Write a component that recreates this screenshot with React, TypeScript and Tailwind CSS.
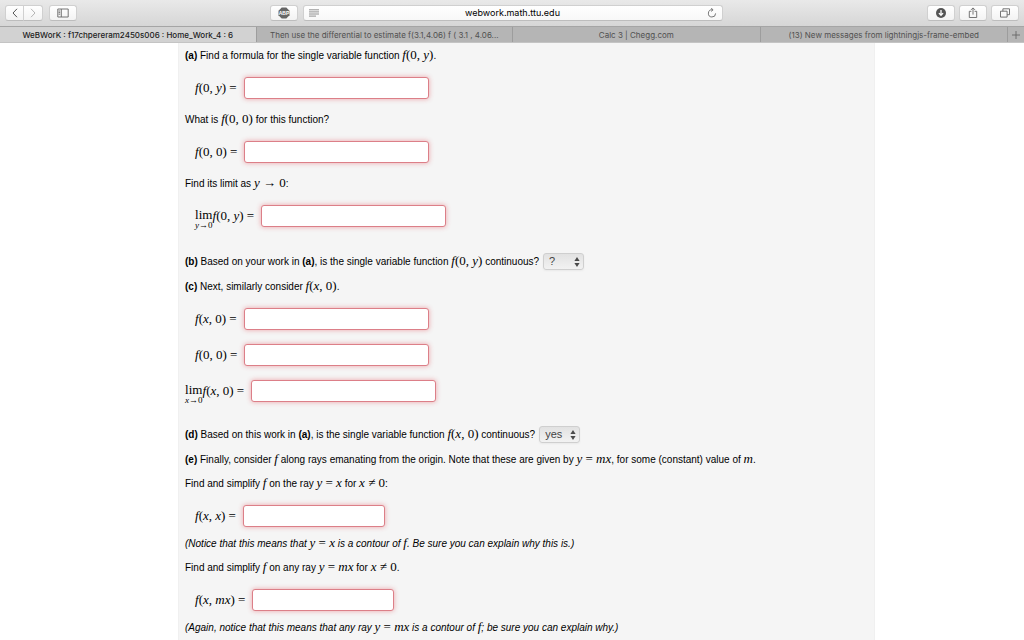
import React from 'react';

const TABS = [
  { title: 'WeBWorK : f17chpereram2450s006 : Home_Work_4 : 6', width: 'w-[25.45%]' },
  { title: 'Then use the differential to estimate f(3.1,4.06) f ( 3.1 , 4.06...', width: 'w-[25.45%]' },
  { title: 'Calc 3 | Chegg.com', width: 'flex-1' },
  { title: '(13) New messages from lightningjs-frame-embed', width: 'flex-1' },
];

// Letters are variables and go italic, everything else stays upright
function Tex({ children }: { children: string }) {
  return (
    <span className="font-['Liberation_Serif',serif] text-[13px] leading-none not-italic">
      {children.split(/([a-z]+)/).map((part, i) => (i % 2 ? <i key={i}>{part}</i> : part))}
    </span>
  );
}

function Line({ className = '', children }: { className?: string; children: React.ReactNode }) {
  return <p className={`h-6 leading-[26px] ${className}`}>{children}</p>;
}

interface AnswerProps {
  id: string;
  tex: string;
  limit?: string;
  row?: string;
  indent?: string;
  size?: string;
}

function Answer({ id, tex, limit, row = 'h-10 pt-2.5', indent = 'pl-2.5', size = 'w-[185px]' }: AnswerProps) {
  return (
    <div className={`flex items-start ${row} ${indent}`}>
      <label htmlFor={id} className="flex h-5 items-center pr-[7px]">
        {limit && (
          <span className="-mb-2 flex flex-col items-center font-['Liberation_Serif',serif]">
            <span className="text-[13px] leading-3">lim</span>
            <span className="text-[9px] leading-2"><i>{limit}</i>→0</span>
          </span>
        )}
        <Tex>{tex}</Tex>
      </label>
      <input
        id={id}
        type="text"
        className={`h-[22px] rounded-[3px] border border-[#dc7f88] bg-white px-1 text-[11px] shadow-[0_0_5px_rgba(225,60,70,0.45)] outline-none ${size}`}
      />
    </div>
  );
}

function Picker({ id, value, options }: { id: string; value: string; options: string[] }) {
  return (
    <span className="relative ml-1 inline-flex">
      <select
        id={id}
        defaultValue={value}
        className="h-[17px] w-[41px] appearance-none rounded-[3px] border border-[#cfcfcf] bg-linear-to-b from-[#e2e2e2] to-[#f2f2f2] pl-[5px] text-[11px] leading-none text-[#444] shadow-xs outline-none"
      >
        {options.map((o) => <option key={o}>{o}</option>)}
      </select>
      <svg viewBox="0 0 6 10" className="pointer-events-none absolute top-1 right-1 h-2.5 w-1.5 fill-[#4a4a4a]">
        <path d="M3 0 5.6 4H.4zM3 10 .4 6h5.2z" />
      </svg>
    </span>
  );
}

function ToolButton({ label, className, children }: { label: string; className: string; children: React.ReactNode }) {
  return (
    <button
      aria-label={label}
      className={`flex h-4 shrink-0 items-center justify-center border border-[#d0d0d0] border-b-[#bdbdbd] bg-linear-to-b from-white to-[#f3f3f3] ${className}`}
    >
      {children}
    </button>
  );
}

function Toolbar() {
  return (
    <div className="flex h-[26px] items-center bg-linear-to-b from-[#e9e9e9] to-[#d6d6d6] px-[5px]">
      <ToolButton label="Back" className="w-[19px] rounded-l-[3px]">
        <svg viewBox="0 0 6 10" className="h-2.5 w-1.5 fill-none stroke-[#555]"><path d="M5 .8 1 5l4 4.2" /></svg>
      </ToolButton>
      <ToolButton label="Forward" className="-ml-px w-5 rounded-r-[3px]">
        <svg viewBox="0 0 6 10" className="h-2.5 w-1.5 fill-none stroke-[#b5b5b5]"><path d="m1 .8 4 4.2-4 4.2" /></svg>
      </ToolButton>
      <ToolButton label="Sidebar" className="ml-1.5 w-7 rounded-[3px]">
        <svg viewBox="0 0 12 10" className="h-2.5 w-3 fill-none stroke-[#666]">
          <path d="M.8 1h10.4v8H.8zM4.3 1v8M1.6 3h1.6M1.6 4.6h1.6M1.6 6.2h1.6" strokeWidth=".9" />
        </svg>
      </ToolButton>

      <div className="flex min-w-0 flex-1 justify-center gap-[5px] pr-15 pl-12">
        <ToolButton label="Adblock" className="w-7 rounded-[3px]">
          <svg viewBox="0 0 12 12" className="h-3 w-3">
            <path d="M3.7.5h4.6l3.2 3.2v4.6l-3.2 3.2H3.7L.5 8.3V3.7z" fill="#666" />
            <text x="6" y="7.8" textAnchor="middle" className="fill-white font-['Liberation_Sans',sans-serif] text-[5px] font-bold">ABP</text>
          </svg>
        </ToolButton>
        <div className="flex h-4 w-[420px] items-center rounded-[3px] border border-[#d0d0d0] border-b-[#bdbdbd] bg-linear-to-b from-white to-[#f8f8f8] px-[5px]">
          <svg viewBox="0 0 10 8" className="h-2 w-2.5 stroke-[#777]"><path d="M0 .8h10M0 2.9h10M0 5h10M0 7.1h7" strokeWidth=".8" /></svg>
          <input
            aria-label="Address"
            defaultValue="webwork.math.ttu.edu"
            className="min-w-0 flex-1 bg-transparent text-center text-[9px] text-black outline-none"
          />
          <button aria-label="Reload">
            <svg viewBox="0 0 10 10" className="size-2.5 fill-none stroke-[#666]">
              <path d="M5.4 1.8A3.6 3.6 0 1 0 8.6 5.4M4.2.2l1.9 1.6-1.9 1.6" strokeWidth=".9" />
            </svg>
          </button>
        </div>
      </div>

      <div className="flex gap-1">
        <ToolButton label="Downloads" className="w-7 rounded-[3px]">
          <svg viewBox="0 0 12 12" className="size-3">
            <circle cx="6" cy="6" r="5" fill="#555" />
            <path d="M6 3v5M3.9 6.1 6 8.3l2.1-2.2" fill="none" stroke="#fff" strokeWidth="1.3" />
          </svg>
        </ToolButton>
        <ToolButton label="Share" className="w-7 rounded-[3px]">
          <svg viewBox="0 0 10 12" className="h-3 w-2.5 fill-none stroke-[#666]">
            <path d="M3.4 4.3H1.3v6.2h7.4V4.3H6.6M5 7.6V1M3 2.9l2-2 2 2" strokeWidth=".9" />
          </svg>
        </ToolButton>
        <ToolButton label="Show all tabs" className="w-7 rounded-[3px]">
          <svg viewBox="0 0 12 12" className="size-3 fill-none stroke-[#666]">
            <path d="M1.5 4.2h6.6v5.9H1.5zM3.9 4.2V1.8h6.6v5.9H8.1" strokeWidth=".9" />
          </svg>
        </ToolButton>
      </div>
    </div>
  );
}

function TabBar() {
  return (
    <div role="tablist" className="flex h-[17px] border-y border-t-[#a5a5a5] border-b-[#c4c4c4] bg-[#b5b5b5]">
      <div className="flex min-w-0 flex-1">
        {TABS.map((tab, i) => (
          <button
            key={tab.title}
            role="tab"
            aria-selected={i === 0}
            className={`${tab.width} min-w-0 truncate border-r border-[#9d9d9d] px-1 text-[8px] leading-4 ${
              i === 0 ? 'bg-[#d2d2d2] font-medium text-[#1c1c1c]' : 'text-[#505050]'
            }`}
          >
            {tab.title}
          </button>
        ))}
      </div>
      <button aria-label="New tab" className="flex w-4 items-center justify-center">
        <svg viewBox="0 0 8 8" className="size-2 stroke-[#666]"><path d="M4 0v8M0 4h8" strokeWidth=".9" /></svg>
      </button>
    </div>
  );
}

export default function App() {
  return (
    <div className="flex h-screen flex-col overflow-hidden bg-white">
      <header className="font-[Inter,sans-serif]">
        <Toolbar />
        <TabBar />
      </header>

      <div className="flex flex-1 pr-[149px] pl-[178px]">
        <main className="min-w-0 flex-1 border-x border-[#f0f0f0] bg-[#f5f5f5] pl-1.5 font-['Liberation_Sans',sans-serif] text-[10px] whitespace-nowrap text-black">
          <Line><b>(a)</b> Find a formula for the single variable function <Tex>f(0, y)</Tex>.</Line>
          <Answer id="a1" tex="f(0, y) =" />
          <Line>What is <Tex>f(0, 0)</Tex> for this function?</Line>
          <Answer id="a2" tex="f(0, 0) =" />
          <Line>Find its limit as <Tex>y → 0</Tex>:</Line>
          <Answer id="a3" tex="f(0, y) =" limit="y" />

          <p className="mt-[13px] flex h-[26px] items-center">
            <label htmlFor="b"><b>(b)</b> Based on your work in <b>(a)</b>, is the single variable function <Tex>f(0, y)</Tex> continuous?</label>
            <Picker id="b" value="?" options={['?', 'yes', 'no']} />
          </p>

          <Line className="mb-0.5"><b>(c)</b> Next, similarly consider <Tex>f(x, 0)</Tex>.</Line>
          <Answer id="c1" tex="f(x, 0) =" row="h-9 pt-2" />
          <Answer id="c2" tex="f(0, 0) =" row="h-9 pt-2" />
          <Answer id="c3" tex="f(x, 0) =" limit="x" row="h-9 pt-2" indent="pl-0" />

          <p className="mt-[13px] flex h-[26px] items-center">
            <label htmlFor="d"><b>(d)</b> Based on this work in <b>(a)</b>, is the single variable function <Tex>f(x, 0)</Tex> continuous?</label>
            <Picker id="d" value="yes" options={['?', 'yes', 'no']} />
          </p>

          <Line>
            <b>(e)</b> Finally, consider <Tex>f</Tex> along rays emanating from the origin. Note that these are given by{' '}
            <Tex>y = mx</Tex>, for some (constant) value of <Tex>m</Tex>.
          </Line>
          <Line>Find and simplify <Tex>f</Tex> on the ray <Tex>y = x</Tex> for <Tex>x ≠ 0</Tex>:</Line>
          <Answer id="e1" tex="f(x, x) =" row="h-9 pt-2.5" size="w-[142px]" />
          <Line className="italic">
            (Notice that this means that <Tex>y = x</Tex> is a contour of <Tex>f</Tex>. Be sure you can explain why this is.)
          </Line>
          <Line>Find and simplify <Tex>f</Tex> on any ray <Tex>y = mx</Tex> for <Tex>x ≠ 0</Tex>.</Line>
          <Answer id="e2" tex="f(x, mx) =" row="h-9 pt-2.5" size="w-[142px]" />
          <Line className="italic">
            (Again, notice that this means that any ray <Tex>y = mx</Tex> is a contour of <Tex>f</Tex>; be sure you can explain why.)
          </Line>
        </main>
      </div>
    </div>
  );
}
